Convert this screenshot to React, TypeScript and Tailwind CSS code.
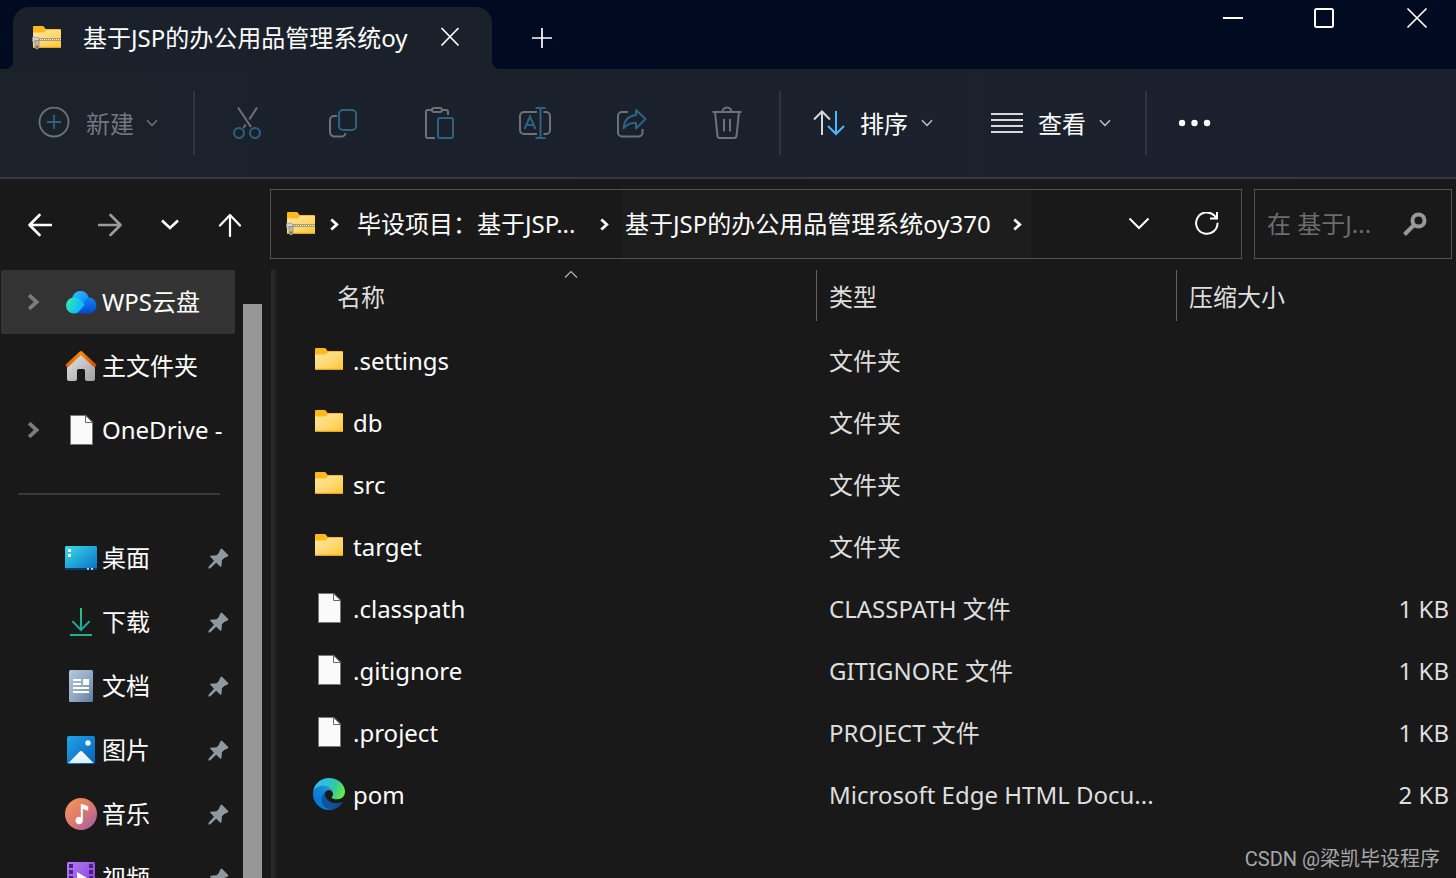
import React from "react";

type IconProps = { className?: string };

function ChevronDown({ className = "size-4" }: IconProps) {
  return (
    <svg viewBox="0 0 16 16" className={className} fill="none" stroke="currentColor" strokeWidth="1.4" aria-hidden="true">
      <path d="M3 5.2 8 10.4l5-5.2" />
    </svg>
  );
}

function ChevronRight({ className = "" }: IconProps) {
  return (
    <svg viewBox="0 0 12 16" className={className} fill="none" stroke="currentColor" strokeWidth="3" aria-hidden="true">
      <path d="M2.5 2.5 8.500 8l-6 5.500" />
    </svg>
  );
}

function Folder({ zip = false }: { zip?: boolean }) {
  const id = React.useId();
  return (
    <svg viewBox="0 1 32 32" className="size-8 shrink-0" aria-hidden="true">
      <defs>
        <linearGradient id={id} x1="0" y1="0" x2="1" y2="1">
          <stop offset="0" stopColor="#ffe6a0" />
          <stop offset="0.5" stopColor="#ffd974" />
          <stop offset="1" stopColor="#ffc830" />
        </linearGradient>
      </defs>
      <path d="M2 6a1 1 0 0 1 1-1h8.400c.8 0 1.200.3 1.600.8L14.600 8H29a1 1 0 0 1 1 1v5H2z" fill="#ffb91a" />
      <path d="M2 11.500h9.500c1 0 1.500-.3 2.200-1l1.100-1.100c.4-.4.800-.5 1.300-.5H30V26a1 1 0 0 1-1 1H3a1 1 0 0 1-1-1z" fill={`url(#${id})`} />
      <path d="M2 25.800V26a1 1 0 0 0 1 1h26a1 1 0 0 0 1-1v-.2z" fill="#e5a522" />
      {zip && (
        <g>
          <path d="M7 18.500h23" stroke="#a39873" strokeWidth="2.800" />
          <path d="M7 18.500h23" stroke="#fff6dc" strokeWidth="1.200" strokeDasharray="1 1" />
          <path d="M1.500 16.300h5.500l1 2.200-1 2.300H1.500z" fill="#d2d2d2" stroke="#858585" strokeWidth=".6" />
          <path d="M4 19.500h4V26.500L6.800 28H5.200L4 26.500z" fill="#bdbab2" stroke="#77746c" strokeWidth=".6" />
          <path d="M5.300 24.500h1.500V27H5.300z" fill="#6b5318" />
        </g>
      )}
    </svg>
  );
}

function FileIcon() {
  return (
    <svg viewBox="0 0 32 32" className="size-8 shrink-0" aria-hidden="true">
      <path d="M5.500 1.500H21l6.500 6.500v22.500h-22z" fill="#fafafa" stroke="#777" />
      <path d="M20.500 1.500V8.500h7z" fill="#fff" stroke="#666" />
    </svg>
  );
}

function EdgeIcon() {
  return (
    <svg viewBox="0 0 256 256" className="size-8 shrink-0" aria-hidden="true">
      <defs>
        <linearGradient id="edge-a" x1="63" y1="178" x2="242" y2="178" gradientUnits="userSpaceOnUse">
          <stop offset="0" stopColor="#0c59a4" />
          <stop offset="1" stopColor="#114a8b" />
        </linearGradient>
        <linearGradient id="edge-b" x1="157" y1="101" x2="46" y2="222" gradientUnits="userSpaceOnUse">
          <stop offset="0" stopColor="#1b9de2" />
          <stop offset="0.4" stopColor="#1284d6" />
          <stop offset="1" stopColor="#0078d4" />
        </linearGradient>
        <linearGradient id="edge-c" x1="15" y1="50" x2="240" y2="150" gradientUnits="userSpaceOnUse">
          <stop offset="0" stopColor="#35c1f1" />
          <stop offset="0.35" stopColor="#2cc0d8" />
          <stop offset="0.65" stopColor="#36c99a" />
          <stop offset="1" stopColor="#66eb45" />
        </linearGradient>
      </defs>
      <g transform="translate(-4.63 -4.92)">
        <path fill="url(#edge-a)" d="M235.680 195.460a93.730 93.730 0 0 1-10.540 4.710 101.870 101.870 0 0 1-35.900 6.460c-47.320 0-88.540-32.550-88.540-74.320A31.480 31.480 0 0 1 117.130 105c-42.800 1.800-53.800 46.400-53.800 72.530 0 73.880 68.090 81.370 82.760 81.370 7.910 0 19.840-2.300 27-4.560l1.310-.44a128.340 128.340 0 0 0 66.600-52.800 4 4 0 0 0-5.320-5.640z" />
        <path fill="url(#edge-b)" d="M110.340 246.340A79.200 79.200 0 0 1 87.600 225a80.720 80.720 0 0 1 29.530-120c3.120-1.470 8.450-4.130 15.540-4a32.350 32.350 0 0 1 25.690 13 31.880 31.880 0 0 1 6.360 18.660c0-.21 24.460-79.600-80-79.600-43.900 0-80 41.660-80 78.210a130.150 130.150 0 0 0 12.110 56 128 128 0 0 0 156.380 67.110 75.550 75.550 0 0 1-62.780-8z" />
        <path fill="url(#edge-c)" d="M156.940 153.780c-.81 1.050-3.300 2.500-3.300 5.660 0 2.610 1.700 5.120 4.720 7.230 14.380 10 41.490 8.680 41.560 8.680a59.560 59.560 0 0 0 30.270-8.350A61.380 61.380 0 0 0 260.620 114c.26-22.410-8-37.310-11.340-43.910C228.090 28.760 182.350 5 132.620 5a128 128 0 0 0-128 126.200c.48-36.540 36.800-66.050 80-66.050 3.500 0 23.460.34 42 10.070 16.340 8.580 24.900 18.940 30.850 29.210 6.180 10.670 7.280 24.150 7.280 29.520s-2.740 13.330-7.810 19.830z" />
      </g>
    </svg>
  );
}

function CloudIcon() {
  return (
    <svg viewBox="0 0 32 32" className="size-8 shrink-0" aria-hidden="true">
      <defs>
        <linearGradient id="cl-a" x1="0" y1="0" x2="1" y2="1">
          <stop offset="0" stopColor="#2fc4ff" />
          <stop offset="1" stopColor="#0a7bff" />
        </linearGradient>
        <linearGradient id="cl-b" x1="0" y1="0" x2="0" y2="1">
          <stop offset="0" stopColor="#0a86f5" />
          <stop offset="1" stopColor="#0747c9" />
        </linearGradient>
        <linearGradient id="cl-c" x1="0" y1="0.2" x2="1" y2="0.6">
          <stop offset="0" stopColor="#45e8a8" />
          <stop offset="0.5" stopColor="#15cfe0" />
          <stop offset="1" stopColor="#16b0ff" />
        </linearGradient>
      </defs>
      <circle cx="15.500" cy="13.500" r="8.500" fill="url(#cl-a)" />
      <path d="M23.500 11.500a8 8 0 0 1 0 16H11L19 17c1-3 2.500-5 4.500-5.500z" fill="url(#cl-b)" />
      <path d="M9 11.500c3 0 5 1 6.500 2.700l4.300 4.600-5.300 6c-1.500 1.700-3 2.700-5.500 2.700a8 8 0 0 1 0-16z" fill="url(#cl-c)" />
    </svg>
  );
}

function HomeIcon() {
  return (
    <svg viewBox="0 0 32 32" className="size-8 shrink-0" aria-hidden="true">
      <defs>
        <linearGradient id="hm-a" x1="0" y1="0" x2="1" y2="1">
          <stop offset="0" stopColor="#e4e4e4" />
          <stop offset="1" stopColor="#a0a0a0" />
        </linearGradient>
        <linearGradient id="hm-b" x1="0" y1="0" x2="1" y2="0">
          <stop offset="0" stopColor="#e2620c" />
          <stop offset="0.5" stopColor="#f58a07" />
          <stop offset="1" stopColor="#d04a02" />
        </linearGradient>
      </defs>
      <path d="M16 4 30 17v12a2 2 0 0 1-2 2h-6a2 2 0 0 1-2-2v-8.500a1.500 1.500 0 0 0-1.500-1.500h-5a1.500 1.500 0 0 0-1.500 1.500V29a2 2 0 0 1-2 2H4a2 2 0 0 1-2-2V17z" fill="url(#hm-a)" />
      <path d="M1.400 16.300 16 2.800l14.600 13.500" fill="none" stroke="url(#hm-b)" strokeWidth="3.600" strokeLinejoin="round" />
    </svg>
  );
}

function DesktopIcon() {
  return (
    <svg viewBox="0 0 32 32" className="size-8 shrink-0" aria-hidden="true">
      <defs>
        <linearGradient id="dk" x1="0" y1="0" x2="1" y2="1">
          <stop offset="0" stopColor="#38dbe8" />
          <stop offset="1" stopColor="#0a6fc8" />
        </linearGradient>
      </defs>
      <rect x="0" y="4" width="32" height="24" rx="1.200" fill="url(#dk)" />
      <path d="M0 26h32v.8a1.200 1.200 0 0 1-1.200 1.200H1.200A1.200 1.200 0 0 1 0 26.800z" fill="#0a3d66" />
      <path d="M3 7h3v3H3zM3 12h3v3H3z" fill="#fff" />
      <path d="M22 26h2v1.800h-2zM26 26h2v1.800h-2z" fill="#c9dcea" />
    </svg>
  );
}

function DownloadIcon() {
  return (
    <svg viewBox="0 0 32 32" className="size-8 shrink-0" aria-hidden="true">
      <defs>
        <linearGradient id="dl" x1="0" y1="2" x2="0" y2="30" gradientUnits="userSpaceOnUse">
          <stop offset="0" stopColor="#2fc481" />
          <stop offset="0.85" stopColor="#17a2a8" />
          <stop offset="0.92" stopColor="#22b184" />
          <stop offset="1" stopColor="#22b184" />
        </linearGradient>
      </defs>
      <path d="M15 2h2v19.500l7-7 1.300 1.300L16 25.500l-9.300-9.700L8 14.500l7 7zM5 28h22v2H5z" fill="url(#dl)" />
    </svg>
  );
}

function DocumentIcon() {
  return (
    <svg viewBox="0 0 32 32" className="size-8 shrink-0" aria-hidden="true">
      <defs>
        <linearGradient id="dc" x1="0" y1="0" x2="1" y2="1">
          <stop offset="0" stopColor="#b6c9dc" />
          <stop offset="0.6" stopColor="#8aa4c0" />
          <stop offset="1" stopColor="#5d7c9e" />
        </linearGradient>
      </defs>
      <rect x="4" y="0" width="24" height="32" rx="1.500" fill="url(#dc)" />
      <path d="M8 9h8v2H8zM8 13h8v2H8zM18 9h6v6h-6zM8 17h16v2H8zM8 21h16v2H8z" fill="#fff" />
    </svg>
  );
}

function PictureIcon() {
  return (
    <svg viewBox="0 0 32 32" className="size-8 shrink-0" aria-hidden="true">
      <defs>
        <linearGradient id="pc" x1="0" y1="0" x2="1" y2="1">
          <stop offset="0" stopColor="#22a5ea" />
          <stop offset="1" stopColor="#0560b8" />
        </linearGradient>
        <linearGradient id="pm" x1="0" y1="0" x2="0" y2="1">
          <stop offset="0" stopColor="#fff" />
          <stop offset="1" stopColor="#dceefb" />
        </linearGradient>
      </defs>
      <rect x="2" y="2" width="28" height="28" rx="1.800" fill="url(#pc)" />
      <circle cx="23" cy="9" r="2.700" fill="#fff" />
      <path d="m3.500 29 11-11.300a2.100 2.100 0 0 1 3 0L28.500 29z" fill="url(#pm)" />
    </svg>
  );
}

function MusicIcon() {
  return (
    <svg viewBox="0 0 32 32" className="size-8 shrink-0" aria-hidden="true">
      <defs>
        <linearGradient id="ms" x1="0" y1="0.1" x2="0.9" y2="1">
          <stop offset="0" stopColor="#f2975a" />
          <stop offset="0.5" stopColor="#df7a6b" />
          <stop offset="1" stopColor="#9a5fae" />
        </linearGradient>
      </defs>
      <circle cx="16" cy="16" r="16" fill="url(#ms)" />
      <path d="M15.800 6c2 .3 5 1.300 7.400 2.200v4.600l-5.400-1.900v11.300a3.700 3.700 0 1 1-2-3z" fill="#fff" />
    </svg>
  );
}

function VideoIcon() {
  return (
    <svg viewBox="0 0 32 32" className="size-8 shrink-0" aria-hidden="true">
      <defs>
        <linearGradient id="vd" x1="0" y1="0" x2="1" y2="1">
          <stop offset="0" stopColor="#b57af5" />
          <stop offset="1" stopColor="#7d3bd6" />
        </linearGradient>
      </defs>
      <rect x="2" y="0" width="28" height="32" rx="1.500" fill="url(#vd)" />
      <path d="M4 2h4v4H4zM4 8h4v4H4zM4 14h4v4H4zM4 20h4v4H4zM24 2h4v4h-4zM24 8h4v4h-4zM24 14h4v4h-4zM24 20h4v4h-4z" fill="#4a2180" />
      <path d="m12 10 10 6-10 6z" fill="#fff" />
    </svg>
  );
}

function PinIcon() {
  return (
    <svg viewBox="0 0 22 22" className="size-[21px] shrink-0" aria-hidden="true">
      <path
        d="M13.200 1c.5-.5 1.200-.4 1.700.1l6 6.100c.6.600.5 1.400-.2 1.700l-3.700 1.700-2.400 2.300-.5 6c-.1.900-.9 1.200-1.500.6l-4-4L2.500 21.200c-.5.400-1.600.3-1.900 0-.2-.4-.2-1.200.2-1.700l5.500-6.100-3.800-3.900c-.6-.6-.3-1.300.5-1.400l6-.4 2.300-2.500z"
        fill="#8d989f"
      />
    </svg>
  );
}

const toolIcons: { label: string; icon: React.ReactNode }[] = [
  {
    label: "剪切",
    icon: (
      <>
        <path d="M7 0.500 20 20M26 0.500 18.300 12.500M14.600 17.500 12.500 21" stroke="#6e7179" />
        <circle cx="8" cy="26" r="5" stroke="#2e6285" />
        <circle cx="24" cy="26" r="5" stroke="#2e6285" />
      </>
    ),
  },
  {
    label: "复制",
    icon: (
      <>
        <path d="M10 9H7a4 4 0 0 0-4 4v12a4.500 4.500 0 0 0 4.500 4.500H14a4 4 0 0 0 4.500-3.500" stroke="#6e7179" />
        <rect x="12" y="3" width="17" height="20" rx="4" stroke="#2e6285" />
      </>
    ),
  },
  {
    label: "粘贴",
    icon: (
      <>
        <path d="M12 31H4.500A1.500 1.500 0 0 1 3 29.500V4.500A1.500 1.500 0 0 1 4.500 3H9M19 3h4a2 2 0 0 1 2 2v3" stroke="#6e7179" />
        <rect x="9" y="1" width="10" height="4" rx="2" stroke="#6e7179" />
        <rect x="15" y="11" width="15" height="20" rx="2" stroke="#2e6285" />
      </>
    ),
  },
  {
    label: "重命名",
    icon: (
      <>
        <path d="M18 5H5a4 4 0 0 0-4 4v14a4 4 0 0 0 4 4h13M24.500 5H27a4 4 0 0 1 4 4v14a4 4 0 0 1-4 4h-2.500" stroke="#6e7179" />
        <path d="M16.500 1h10M16.500 31h10M21.500 1v30M5.500 22 11 9.500 16.500 22M7.500 18h7.500" stroke="#2e6285" />
      </>
    ),
  },
  {
    label: "共享",
    icon: (
      <>
        <path d="M13 5H7a4 4 0 0 0-4 4v16.500A4 4 0 0 0 7 29.500h16.500a4 4 0 0 0 4-4V22" stroke="#6e7179" />
        <path d="M21 3 30.500 12 21 21.500v-5.500c-5-.5-9 1-12.500 5.500.5-7.500 4.500-12.500 12.500-13.500z" stroke="#2e6285" strokeLinejoin="round" />
      </>
    ),
  },
  {
    label: "删除",
    icon: (
      <path d="M1.500 5h29M11.500 5a4.500 4.500 0 0 1 9 0M4 5l2.500 24a2.500 2.500 0 0 0 2.500 2h14a2.500 2.500 0 0 0 2.500-2L28 5M13 12v12.500M19 12v12.500" stroke="#6e7179" />
    ),
  },
];

function Separator() {
  return <div className="h-16 w-[2px] bg-[#30343f]" />;
}

const quickAccess = [
  { name: "桌面", icon: <DesktopIcon /> },
  { name: "下载", icon: <DownloadIcon /> },
  { name: "文档", icon: <DocumentIcon /> },
  { name: "图片", icon: <PictureIcon /> },
  { name: "音乐", icon: <MusicIcon /> },
  { name: "视频", icon: <VideoIcon /> },
];

const files = [
  { name: ".settings", type: "文件夹", size: "", icon: <Folder /> },
  { name: "db", type: "文件夹", size: "", icon: <Folder /> },
  { name: "src", type: "文件夹", size: "", icon: <Folder /> },
  { name: "target", type: "文件夹", size: "", icon: <Folder /> },
  { name: ".classpath", type: "CLASSPATH 文件", size: "1 KB", icon: <FileIcon /> },
  { name: ".gitignore", type: "GITIGNORE 文件", size: "1 KB", icon: <FileIcon /> },
  { name: ".project", type: "PROJECT 文件", size: "1 KB", icon: <FileIcon /> },
  { name: "pom", type: "Microsoft Edge HTML Docu...", size: "2 KB", icon: <EdgeIcon /> },
];

function SideItem({ name, icon, expandable, pinned, selected }: { name: string; icon: React.ReactNode; expandable?: boolean; pinned?: boolean; selected?: boolean }) {
  return (
    <li>
      <a
        href="#"
        className={`ml-px flex h-16 items-center whitespace-nowrap pr-[6px] ${selected ? "rounded-xs bg-[#333333]" : ""}`}
      >
        <span className="flex w-16 shrink-0 justify-center text-[#7c7c7c]">
          {expandable && <ChevronRight className="h-5 w-[15px]" />}
        </span>
        {icon}
        <span className="ml-[5px] flex-1">{name}</span>
        {pinned && <PinIcon />}
      </a>
    </li>
  );
}

function TitleBar() {
  return (
    <header className="flex h-[69px] shrink-0 items-end bg-[#000a20]">
      <svg viewBox="0 0 8 8" className="ml-[5px] size-2 shrink-0" aria-hidden="true"><path d="M8 0v8H0a8 8 0 0 0 8-8z" fill="#1b212b" /></svg>
      <div className="flex h-[62px] w-[479px] items-center rounded-t-2xl bg-[#1b212b] pl-[18px]">
        <Folder zip />
        <span className="ml-5 w-[329px] whitespace-nowrap">基于JSP的办公用品管理系统oy</span>
        <button aria-label="关闭标签页" className="ml-[26px] flex size-6 items-center justify-center">
          <svg viewBox="0 0 24 24" className="size-6" stroke="currentColor" strokeWidth="1.700"><path d="m3.500 2 17 17.500m0-17.500-17 17.500" /></svg>
        </button>
      </div>
      <svg viewBox="0 0 8 8" className="size-2 shrink-0" aria-hidden="true"><path d="M0 0v8h8a8 8 0 0 1-8-8z" fill="#1b212b" /></svg>
      <button aria-label="新建标签页" className="ml-[30px] flex h-[62px] w-6 items-center">
        <svg viewBox="0 0 24 24" className="size-6" stroke="currentColor" strokeWidth="1.700"><path d="M12 2v20M2 12h20" /></svg>
      </button>
      <div className="ml-auto flex h-full items-start">
        <button aria-label="最小化" className="flex h-9 w-[91px] items-center justify-center">
          <svg viewBox="0 0 24 24" className="size-6" stroke="currentColor" strokeWidth="2"><path d="M2 12h20" /></svg>
        </button>
        <button aria-label="最大化" className="flex h-9 w-[92px] items-center justify-center">
          <svg viewBox="0 0 24 24" className="size-6" fill="none" stroke="currentColor" strokeWidth="2"><rect x="3" y="3" width="18" height="18" rx="1.500" /></svg>
        </button>
        <button aria-label="关闭" className="flex h-9 w-[86px] items-center justify-center pl-2">
          <svg viewBox="0 0 24 24" className="size-6" stroke="currentColor" strokeWidth="1.700"><path d="m2.500 2.500 19 19m0-19-19 19" /></svg>
        </button>
      </div>
    </header>
  );
}

function Toolbar() {
  return (
    <div className="flex h-[110px] shrink-0 items-center border-b-2 border-[#3a383c] bg-linear-to-r from-[#1b222a] to-[#1b202e] pl-[38px]">
      <button className="flex items-center gap-4 text-[#74777d]">
        <svg viewBox="0 0 32 32" className="size-8" fill="none" strokeWidth="1.800" aria-hidden="true">
          <circle cx="16" cy="15" r="14.500" stroke="#6e7179" />
          <path d="M16 8v14M9 15h14" stroke="#2e6285" />
        </svg>
        <span className="flex items-center gap-[10px]"><span className="pt-[2px]">新建</span><ChevronDown /></span>
      </button>
      <div className="ml-[33px] mr-1"><Separator /></div>
      {toolIcons.map((t) => (
        <button key={t.label} aria-label={t.label} className="flex h-16 w-24 items-center justify-center">
          <svg viewBox="-1 -1 34 34" className="size-[34px]" fill="none" strokeWidth="2">{t.icon}</svg>
        </button>
      ))}
      <div className="ml-1 mr-8"><Separator /></div>
      <button className="flex items-center gap-[15px]">
        <svg viewBox="0 0 32 32" className="size-8" fill="none" strokeWidth="2" aria-hidden="true">
          <path d="M9 28V5M1 12.500 9 4.500l8 8" stroke="#d8d8d8" />
          <path d="M23 4v23M15 19l8 8 8-8" stroke="#4cb8fb" />
        </svg>
        <span className="flex items-center gap-[11px]"><span className="pt-[2px]">排序</span><ChevronDown className="size-4 text-[#c4c6ca]" /></span>
      </button>
      <button className="ml-14 flex items-center gap-[15px]">
        <svg viewBox="0 0 32 32" className="size-8" stroke="#d8d8d8" strokeWidth="2" aria-hidden="true">
          <path d="M0 7h32M0 13h32M0 19h32M0 25h32" />
        </svg>
        <span className="flex items-center gap-[11px]"><span className="pt-[2px]">查看</span><ChevronDown className="size-4 text-[#c4c6ca]" /></span>
      </button>
      <div className="ml-8 mr-8"><Separator /></div>
      <button aria-label="更多">
        <svg viewBox="0 0 32 32" className="size-8" fill="#fff"><circle cx="3" cy="16" r="3.200" /><circle cx="15.500" cy="16" r="3.200" /><circle cx="28" cy="16" r="3.200" /></svg>
      </button>
    </div>
  );
}

function NavBar() {
  return (
    <div className="flex h-[91px] shrink-0 items-center pb-[1px] pr-1">
      <nav className="flex w-[270px] shrink-0 items-center pl-7 pt-[2px]">
        <button aria-label="后退" className="mr-[46px]">
          <svg viewBox="0 0 24 24" className="size-6" fill="none" stroke="#fff" strokeWidth="2.600" strokeLinecap="round" strokeLinejoin="round"><path d="M11.500 2 1.500 12l10 10M1.500 12H23" /></svg>
        </button>
        <button aria-label="前进" className="mr-9">
          <svg viewBox="0 0 24 24" className="size-6" fill="none" stroke="#9b9b9b" strokeWidth="2.600" strokeLinecap="round" strokeLinejoin="round"><path d="m12.500 2 10 10-10 10M22.500 12H1" /></svg>
        </button>
        <button aria-label="最近浏览的位置" className="mr-9">
          <svg viewBox="0 0 24 24" className="size-6" fill="none" stroke="#fff" strokeWidth="2.600"><path d="m4 7.500 8 7.500 8-7.500" /></svg>
        </button>
        <button aria-label="向上">
          <svg viewBox="0 0 24 24" className="size-6" fill="none" stroke="#fff" strokeWidth="2.200" strokeLinecap="round" strokeLinejoin="round"><path d="M12 23V2M2 12.500 12 2l10 10.500" /></svg>
        </button>
      </nav>
      <div className="flex h-[70px] min-w-0 flex-1 items-center border border-[#535353]">
        <span className="ml-[14px]"><Folder zip /></span>
        <ChevronRight className="ml-3 mr-[17px] h-[15px] w-[11px] shrink-0" />
        <a href="#" className="w-[226px] whitespace-nowrap">毕设项目：基于JSP...</a>
        <ChevronRight className="ml-4 mr-3 h-[15px] w-[11px] shrink-0" />
        <div className="flex h-full w-[409px] items-center bg-[#1d1d1d] pl-[3px] pr-2">
          <a href="#" className="whitespace-nowrap">基于JSP的办公用品管理系统oy370</a>
          <ChevronRight className="ml-auto h-[15px] w-[11px] shrink-0" />
        </div>
        <button aria-label="以前的位置" className="ml-auto">
          <svg viewBox="0 0 24 24" className="size-6" fill="none" stroke="#fff" strokeWidth="2"><path d="m2.500 6.500 9.500 9.500 9.500-9.500" /></svg>
        </button>
        <button aria-label="刷新" className="ml-11 mr-[22px]">
          <svg viewBox="0 0 24 24" className="size-6" fill="none" stroke="#fff" strokeWidth="2"><path d="M22.500 10.800A10.700 10.700 0 1 1 19 3.200L21.500 6M15 6.500H22V0" /></svg>
        </button>
      </div>
      <label className="ml-3 flex h-[70px] w-[198px] items-center border border-[#535353] pl-3">
        <input aria-label="搜索" placeholder="在 基于J..." className="w-[112px] min-w-0 bg-transparent outline-none placeholder:text-[#6d6d6d] placeholder:opacity-100" />
        <svg viewBox="0 0 24 24" className="ml-6 size-6 shrink-0" fill="none" stroke="#999" strokeWidth="4" aria-hidden="true"><circle cx="15.500" cy="8.500" r="6" /><path d="M11 13 1.500 22.500" /></svg>
      </label>
    </div>
  );
}

export default function App() {
  return (
    <div className="relative flex h-screen flex-col overflow-hidden bg-[#191919] font-['Noto_Sans','Noto_Sans_CJK_SC',sans-serif] text-2xl leading-8 text-white">
      <TitleBar />
      <Toolbar />
      <NavBar />
      <div className="flex min-h-0 flex-1">
        <aside className="flex w-[277px] shrink-0 overflow-hidden">
          <ul className="w-[235px] shrink-0">
            <SideItem name="WPS云盘" icon={<CloudIcon />} expandable selected />
            <SideItem name="主文件夹" icon={<HomeIcon />} />
            <SideItem name="OneDrive -" icon={<FileIcon />} expandable />
            <li className="flex h-16 items-center pl-[18px] pr-[15px]"><hr className="w-full border-t-2 border-[#3a3a3a]" /></li>
            {quickAccess.map((q) => (
              <SideItem key={q.name} name={q.name} icon={q.icon} pinned />
            ))}
          </ul>
          <div className="ml-2 mt-[34px] w-[19px] bg-[#979797]" />
          <div className="ml-auto w-[6px] border-l-[3px] border-[#282828] bg-[#202020]" />
        </aside>
        <main className="min-w-0 flex-1">
          <table className="w-full table-fixed border-collapse">
            <thead>
              <tr className="h-[60px] text-left align-top text-[#dedede]">
                <th className="relative w-[539px] p-0 font-normal">
                  <div className="flex h-[51px] items-center pl-[60px] pt-[2px]">名称</div>
                  <svg viewBox="0 0 14 8" className="absolute left-[287px] top-0 h-2 w-[14px]" fill="none" stroke="#b5b5b5" strokeWidth="1.200" aria-hidden="true"><path d="m1 7.500 6-6 6 6" /></svg>
                </th>
                <th className="w-[360px] p-0 font-normal">
                  <div className="flex h-[51px] items-center border-l border-[#636363] pl-3 pt-[2px]">类型</div>
                </th>
                <th className="p-0 font-normal">
                  <div className="flex h-[51px] items-center border-l border-[#636363] pl-3 pt-[2px]">压缩大小</div>
                </th>
              </tr>
            </thead>
            <tbody>
              {files.map((f) => (
                <tr key={f.name} className="h-[62px] whitespace-nowrap text-[#dedede]">
                  <td className="p-0 pl-9">
                    <div className="flex items-center gap-2 text-white">
                      <span className="pb-[2px]">{f.icon}</span>
                      {f.name}
                    </div>
                  </td>
                  <td className="p-0 pl-[13px]">{f.type}</td>
                  <td className="p-0 pr-[7px] text-right">{f.size}</td>
                </tr>
              ))}
            </tbody>
          </table>
        </main>
      </div>
      <div className="absolute bottom-[3px] right-4 text-xl leading-8 text-[#a8a8a8] font-['Roboto','Noto_Sans_CJK_SC',sans-serif]">CSDN @梁凯毕设程序</div>
    </div>
  );
}
